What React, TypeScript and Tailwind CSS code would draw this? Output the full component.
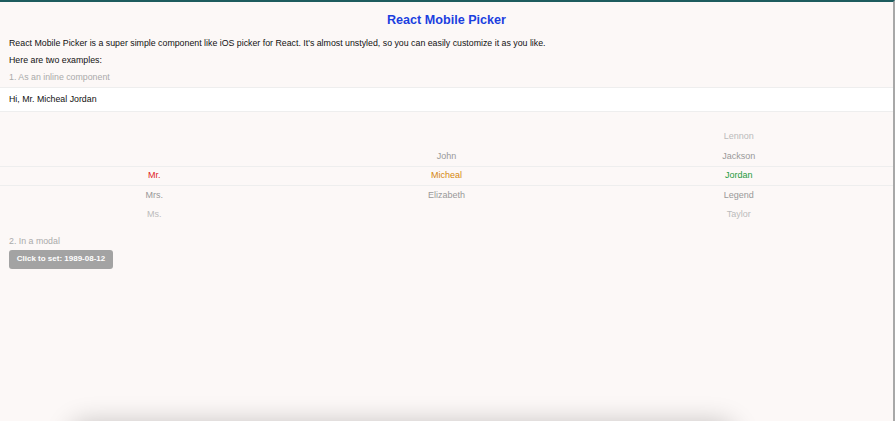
import { useState } from 'react';

const columns = [
  { items: ['', '', 'Mr.', 'Mrs.', 'Ms.'], color: 'text-[#e01b1b]' },
  { items: ['', 'John', 'Micheal', 'Elizabeth', ''], color: 'text-[#d4870f]' },
  { items: ['Lennon', 'Jackson', 'Jordan', 'Legend', 'Taylor'], color: 'text-[#1f9a3c]' },
];

export default function App() {
  const [value] = useState({ title: 'Mr.', firstName: 'Micheal', lastName: 'Jordan' });

  return (
    <div className="min-h-[421px] bg-[#fcf8f7] border-t-2 border-t-[#1d5c5e] border-r-2 border-r-[#a8a8a8] text-[#111] font-['Liberation_Sans',sans-serif]">
      <h1 className="text-center text-[12.6px] font-bold text-[#1b3fe0] pt-[9px] leading-[18px]">
        React Mobile Picker
      </h1>
      <div className="px-[9px] text-[8.8px] leading-[17px] mt-[6px]">
        <p>
          React Mobile Picker is a super simple component like iOS picker for React. It's almost unstyled, so you can
          easily customize it as you like.
        </p>
        <p>Here are two examples:</p>
        <p className="text-[#aaa]">1. As an inline component</p>
      </div>
      <div className="mt-[1px] bg-white border-y border-[#eee] px-[9px] h-[25px] flex items-center text-[8.8px]">
        Hi, {value.title} {value.firstName} {value.lastName}
      </div>
      <div className="pt-[15px] pb-[8px]">
        {[0, 1, 2, 3, 4].map((i) => (
          <div
            key={i}
            className={
              'h-[19.5px] px-2 grid grid-cols-3 text-[9px] ' + (i === 2 ? 'border-y border-[#eee]' : '')
            }
          >
            {columns.map((col, ci) => (
              <div
                key={ci}
                className={
                  'flex items-center justify-center ' +
                  (i === 2 ? col.color : i === 1 || i === 3 ? 'text-[#999]' : 'text-[#bbb]')
                }
              >
                {col.items[i]}
              </div>
            ))}
          </div>
        ))}
      </div>
      <div className="px-[9px] text-[8.8px]">
        <p className="text-[#aaa] leading-[17px]">2. In a modal</p>
        <button className="h-[19px] w-[104px] rounded-[3px] bg-[#a3a3a3] text-white text-[8px] font-bold">
          Click to set: 1989-08-12
        </button>
      </div>
      <div className="fixed left-[70px] w-[665px] top-[422px] h-[200px] bg-white rounded-[16px] shadow-[0_0_26px_rgba(0,0,0,0.22)]" />
    </div>
  );
}
